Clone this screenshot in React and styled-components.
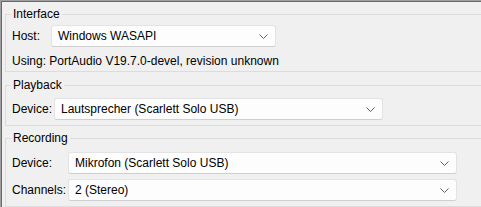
import React from 'react';
import styled, { createGlobalStyle } from 'styled-components';

// Page-wide defaults
const GlobalStyle = createGlobalStyle`
  html, body {
    margin: 0;
    padding: 0;
    background: #f0f0f0;
  }
  body {
    font-family: "Liberation Sans", Arial, sans-serif;
    font-size: 12px;
    color: #000;
  }
`;

// Sunken panel that holds the three group boxes
const Panel = styled.div`
  width: 481px;
  height: 207px;
  box-sizing: border-box;
  overflow: hidden;
  border-left: 1px solid #a0a0a0;
  border-top: 1px solid #a0a0a0;
  box-shadow: inset 1px 1px 0 #696969;
  padding: 5px 0 0 4px;
`;

const Group = styled.fieldset`
  margin: ${(p) => p.$top || 0}px 0 0 0;
  padding: ${(p) => p.$padTop || 4}px 0 ${(p) => p.$padBottom || 4}px 6px;
  border: 1px solid #dcdcdc;
  border-right: none;
  min-width: 0;
`;

const Legend = styled.legend`
  padding: 0 2px;
  margin-left: -1px;
  line-height: 16px;
`;

const Rows = styled.div`
  display: flex;
  flex-direction: column;
  gap: 5px;
`;

const Row = styled.div`
  display: flex;
  align-items: center;
`;

const Label = styled.span`
  width: ${(p) => p.$w}px;
  flex: none;
  line-height: 16px;
  white-space: nowrap;
`;

const Combo = styled.div`
  width: ${(p) => p.$w}px;
  height: 22px;
  box-sizing: border-box;
  display: flex;
  align-items: center;
  justify-content: space-between;
  padding: 0 7px 0 6px;
  background: #fdfdfd;
  border: 1px solid #e3e3e3;
  border-bottom-color: #cfcfcf;
  border-radius: 3px;
  white-space: nowrap;
`;

const Info = styled.div`
  margin-top: 6px;
  line-height: 16px;
`;

const Chevron = () => (
  <svg width="9" height="5" viewBox="0 0 9 5">
    <path d="M0.5 0.5 L4.5 4.5 L8.5 0.5" fill="none" stroke="#606060" strokeWidth="1" />
  </svg>
);

const Select = ({ w, value }) => (
  <Combo $w={w}>
    <span>{value}</span>
    <Chevron />
  </Combo>
);

const App = () => (
  <>
    <GlobalStyle />
    <Panel>
      <Group $padTop={3} $padBottom={2}>
        <Legend>Interface</Legend>
        <Row>
          <Label $w={39}>Host:</Label>
          <Select w={225} value="Windows WASAPI" />
        </Row>
        <Info>Using: PortAudio V19.7.0-devel, revision unknown</Info>
      </Group>

      <Group $top={5} $padTop={5} $padBottom={5}>
        <Legend>Playback</Legend>
        <Row>
          <Label $w={42}>Device:</Label>
          <Select w={329} value="Lautsprecher (Scarlett Solo USB)" />
        </Row>
      </Group>

      <Group $top={4} $padTop={6} $padBottom={5}>
        <Legend>Recording</Legend>
        <Rows>
          <Row>
            <Label $w={56}>Device:</Label>
            <Select w={389} value="Mikrofon (Scarlett Solo USB)" />
          </Row>
          <Row>
            <Label $w={56}>Channels:</Label>
            <Select w={389} value="2 (Stereo)" />
          </Row>
        </Rows>
      </Group>
    </Panel>
  </>
);

export default App;
